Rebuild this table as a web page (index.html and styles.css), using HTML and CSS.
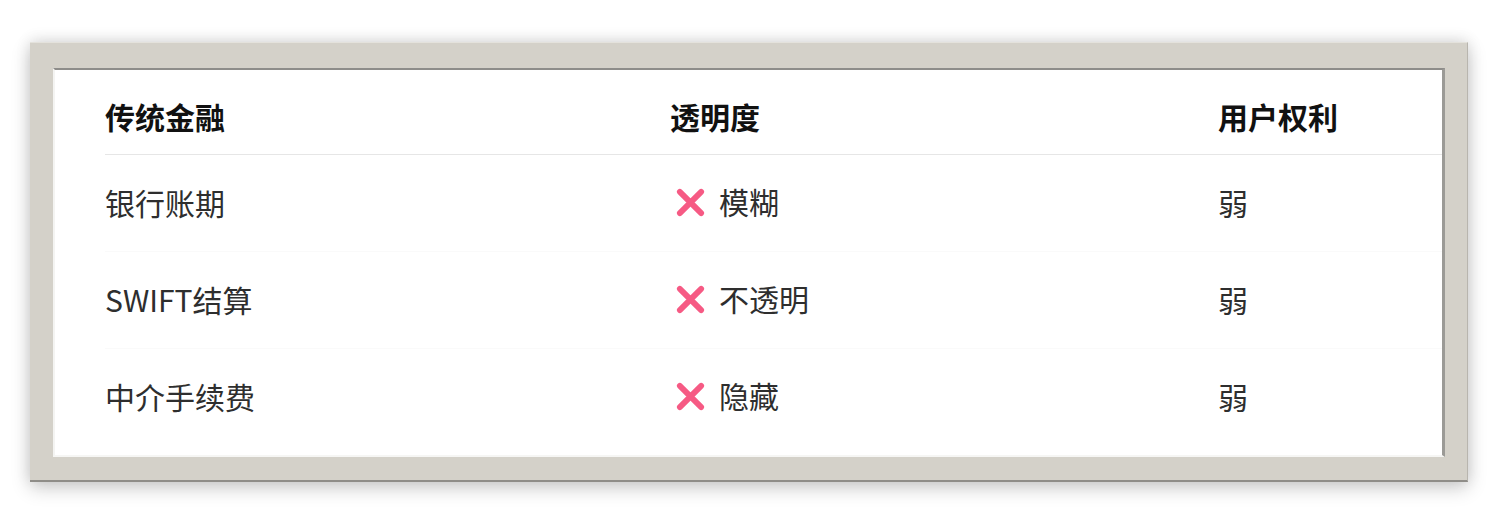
FILE: index.html
```html
<!DOCTYPE html>
<html lang="zh">
<head>
<meta charset="utf-8">
<link rel="stylesheet" href="styles.css">
</head>
<body>
<div class="page">
  <div class="frame">
    <div class="panel">
      <table class="cmp">
        <colgroup>
          <col class="c1"><col class="c2"><col class="c3">
        </colgroup>
        <thead>
          <tr><th>传统金融</th><th>透明度</th><th>用户权利</th></tr>
        </thead>
        <tbody>
          <tr>
            <td>银行账期</td>
            <td><span class="st"><svg class="x" viewBox="0 0 32 32"><path d="M5 5 L27 27 M27 5 L5 27"/></svg>模糊</span></td>
            <td>弱</td>
          </tr>
          <tr>
            <td>SWIFT结算</td>
            <td><span class="st"><svg class="x" viewBox="0 0 32 32"><path d="M5 5 L27 27 M27 5 L5 27"/></svg>不透明</span></td>
            <td>弱</td>
          </tr>
          <tr>
            <td>中介手续费</td>
            <td><span class="st"><svg class="x" viewBox="0 0 32 32"><path d="M5 5 L27 27 M27 5 L5 27"/></svg>隐藏</span></td>
            <td>弱</td>
          </tr>
        </tbody>
      </table>
    </div>
  </div>
</div>
</body>
</html>
```

FILE: styles.css
```css
html, body {
  margin: 0;
  padding: 0;
  background: #ffffff;
}
body {
  font-family: "Noto Sans CJK SC", "Noto Sans", sans-serif;
  width: 1500px;
  height: 525px;
  overflow: hidden;
}
.page {
  padding: 42px 32px 0 30px;
}
.frame {
  height: 440px;
  box-sizing: border-box;
  background: #d4d1c9;
  padding: 25px 22px 23px 23px;
  border-top: 1px solid #e4e2dc;
  border-bottom: 2px solid #8f8d88;
  border-right: 1px solid #b8b5ae;
  box-shadow: 0 6px 18px rgba(0,0,0,0.20), 0 -2px 14px rgba(0,0,0,0.10);
}
.panel {
  height: 100%;
  box-sizing: border-box;
  background: #ffffff;
  border-top: 2px solid #8e8d8a;
  border-left: 2px solid #f4f4f2;
  border-right: 3px solid #9b9a96;
  border-bottom: 2px solid #f6f6f4;
  padding: 16px 0 0 50px;
  overflow: hidden;
}
.cmp {
  width: 100%;
  border-collapse: collapse;
  table-layout: fixed;
}
.c1 { width: 565px; }
.c2 { width: 548px; }
.cmp th {
  text-align: left;
  font-size: 30px;
  font-weight: 700;
  color: #111111;
  height: 60px;
  padding: 0 0 8px 0;
  border-bottom: 1px solid #e6e6e6;
  vertical-align: middle;
}
.cmp td {
  font-size: 30px;
  color: #2e2e2e;
  height: 94px;
  padding: 0 0 2px 0;
  border-bottom: 1px solid #fafafa;
  vertical-align: middle;
}
.cmp tbody tr:last-child td {
  border-bottom: none;
}
.st {
  display: inline-flex;
  align-items: center;
  gap: 13px;
  padding-left: 5px;
}
.x {
  width: 31px;
  height: 31px;
  flex: none;
  transform: translateY(2px);
}
.x path {
  stroke: #f65a84;
  stroke-width: 6;
  stroke-linecap: round;
  fill: none;
}
```
